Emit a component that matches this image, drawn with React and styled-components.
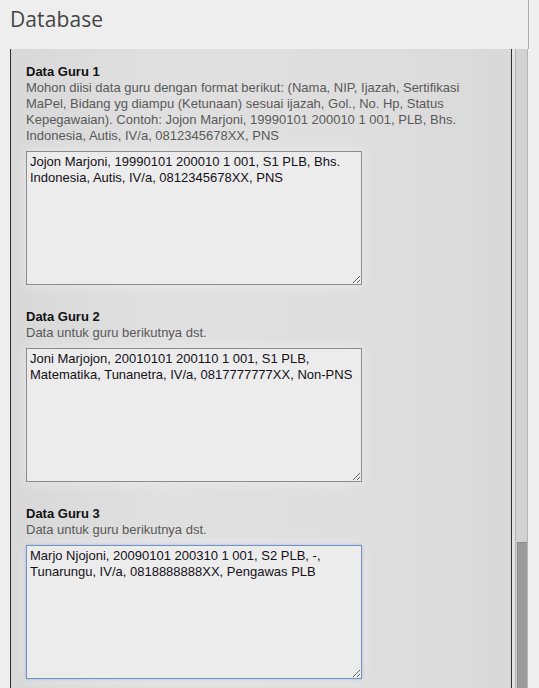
import React from "react";
import styled, { createGlobalStyle } from "styled-components";

const GlobalStyle = createGlobalStyle`
  html, body {
    margin: 0;
    padding: 0;
    background: #eeeeee;
  }
`;

const Page = styled.div`
  width: 539px;
  height: 688px;
  overflow: hidden;
  background: #efefef;
  font-family: "Liberation Sans", Arial, sans-serif;
`;

const Header = styled.div`
  width: 518px;
  height: 49px;
  padding-left: 10px;
  box-sizing: content-box;
  border-right: 1px solid #a9a9a9;
  background: #eeeeee;

  h2 {
    margin: 0;
    padding-top: 5px;
    font-family: "Open Sans", "DejaVu Sans", sans-serif;
    font-size: 21px;
    font-weight: 400;
    line-height: 28px;
    color: #454545;
    letter-spacing: 0.1px;
  }
`;

const Body = styled.div`
  display: flex;
  align-items: stretch;
  padding-left: 10px;
  height: 639px;
`;

const Panel = styled.div`
  width: 502px;
  box-sizing: border-box;
  padding: 15px 0 0 15px;
  border-left: 1px solid #2e2e2e;
  border-right: 1px solid #2e2e2e;
  background: linear-gradient(90deg, #d8d8d8 0%, #e0e0e0 30%, #dedede 70%, #d9d9d9 100%);
`;

const Gap = styled.div`
  width: 3px;
  background: #e2e2e2;
`;

const Scrollbar = styled.div`
  width: 11px;
  display: flex;
  flex-direction: column;
  border-left: 1px solid #b4b4b4;
  border-right: 1px solid #b4b4b4;
  background: #d2d2d2;
`;

const Thumb = styled.div`
  margin-top: ${(p) => p.$top}px;
  margin-left: 1px;
  flex: 1;
  background: #9b9b9b;
  border-left: 1px solid #8a8a8a;
  border-top: 1px solid #8a8a8a;
`;

const Field = styled.div`
  margin-bottom: 24px;
`;

const Label = styled.div`
  font-size: 13px;
  font-weight: 700;
  line-height: 16px;
  color: #111;
`;

const Hint = styled.div`
  font-size: 13px;
  line-height: 16px;
  color: #595959;
`;

const Box = styled.textarea`
  display: block;
  margin-top: 7px;
  width: 336px;
  height: 134px;
  box-sizing: border-box;
  padding: 2px 3px;
  font-family: "Liberation Sans", Arial, sans-serif;
  font-size: 13px;
  line-height: 16px;
  color: #141018;
  background: #ececec;
  border: 1px solid ${(p) => (p.$active ? "#6f92c8" : "#8c8c8c")};
  border-radius: 0;
  outline: none;
  box-shadow: ${(p) =>
    p.$active
      ? "0 0 3px rgba(111, 146, 200, 0.5), 0 0 14px rgba(255, 255, 255, 0.45)"
      : "0 0 14px rgba(255, 255, 255, 0.45)"};
`;

const fields = [
  {
    title: "Data Guru 1",
    hint: [
      "Mohon diisi data guru dengan format berikut: (Nama, NIP, Ijazah, Sertifikasi",
      "MaPel, Bidang yg diampu (Ketunaan) sesuai ijazah, Gol., No. Hp, Status",
      "Kepegawaian). Contoh: Jojon Marjoni, 19990101 200010 1 001, PLB, Bhs.",
      "Indonesia, Autis, IV/a, 0812345678XX, PNS",
    ],
    value:
      "Jojon Marjoni, 19990101 200010 1 001, S1 PLB, Bhs. Indonesia, Autis, IV/a, 0812345678XX, PNS",
  },
  {
    title: "Data Guru 2",
    hint: ["Data untuk guru berikutnya dst."],
    value:
      "Joni Marjojon, 20010101 200110 1 001, S1 PLB, Matematika, Tunanetra, IV/a, 0817777777XX, Non-PNS",
  },
  {
    title: "Data Guru 3",
    hint: ["Data untuk guru berikutnya dst."],
    value:
      "Marjo Njojoni, 20090101 200310 1 001, S2 PLB, -, Tunarungu, IV/a, 0818888888XX, Pengawas PLB",
    active: true,
  },
];

export default function App() {
  return (
    <Page>
      <GlobalStyle />
      <Header>
        <h2>Database</h2>
      </Header>
      <Body>
        <Panel>
          {fields.map((f) => (
            <Field key={f.title}>
              <Label>{f.title}</Label>
              <Hint>
                {f.hint.map((line, i) => (
                  <React.Fragment key={i}>
                    {line}
                    {i < f.hint.length - 1 && <br />}
                  </React.Fragment>
                ))}
              </Hint>
              <Box $active={f.active} defaultValue={f.value} spellCheck={false} />
            </Field>
          ))}
        </Panel>
        <Gap />
        <Scrollbar>
          <Thumb $top={493} />
        </Scrollbar>
      </Body>
    </Page>
  );
}
